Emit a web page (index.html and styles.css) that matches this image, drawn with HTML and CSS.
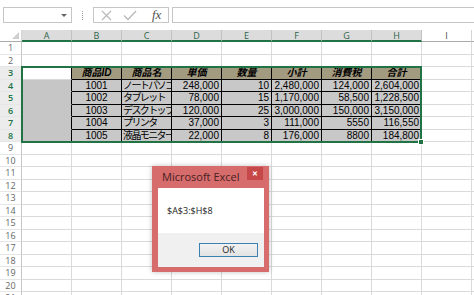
FILE: index.html
```html
<!DOCTYPE html>
<html lang="ja">

<head>
    <meta charset="UTF-8">
    <meta name="viewport" content="width=device-width, initial-scale=1.0">
    <title>Microsoft Excel</title>

    <link rel="stylesheet" href="styles.css">
</head>

<body>

    <div class="toolbar">
        <div class="name-box"><span class="drop"></span></div>
        <div class="grip"></div>
        <div class="fx-box">
            <svg class="icon-cancel" width="11" height="11" viewBox="0 0 11 11">
                <path d="M1 1 L10 10 M10 1 L1 10" stroke="#b9b9b9" stroke-width="1.2" fill="none" />
            </svg>
            <svg class="icon-enter" width="14" height="11" viewBox="0 0 14 11">
                <path d="M1 5.5 L5 9.5 L13 1" stroke="#b9b9b9" stroke-width="1.3" fill="none" />
            </svg>
            <span class="fx">fx</span>
        </div>
        <div class="formula"></div>
    </div>

    <div class="sheet-wrap">
        <div class="sheet"></div>

        <div class="selection"><span class="handle"></span></div>

        <div class="dialog">
            <div class="dialog-title">
                <span>Microsoft Excel</span>
                <span class="close">&#x2715;</span>
            </div>
            <div class="dialog-body">
                <p class="message">$A$3:$H$8</p>
                <div class="buttons">
                    <button class="ok">OK</button>
                </div>
            </div>
        </div>
    </div>

    <script>
        const letters = ["A", "B", "C", "D", "E", "F", "G", "H", "I", ""];
        const align = ["", "center", "left", "right", "right", "right", "right", "right"];

        const rows = {
            3: ["", "商品ID", "商品名", "単価", "数量", "小計", "消費税", "合計"],
            4: ["", "1001", "ノートパソコン", "248,000", "10", "2,480,000", "124,000", "2,604,000"],
            5: ["", "1002", "タブレット", "78,000", "15", "1,170,000", "58,500", "1,228,500"],
            6: ["", "1003", "デスクトップ", "120,000", "25", "3,000,000", "150,000", "3,150,000"],
            7: ["", "1004", "プリンタ", "37,000", "3", "111,000", "5550", "116,550"],
            8: ["", "1005", "液晶モニター", "22,000", "8", "176,000", "8800", "184,800"],
        };

        const sheet = document.querySelector(".sheet");

        const corner = document.createElement("div");
        corner.className = "corner";
        corner.innerHTML = "<span class='tri'></span>";
        sheet.append(corner);

        letters.forEach((letter, i) => {
            const head = document.createElement("div");
            head.className = "col-head";
            if (i < 8) head.classList.add("selected");
            head.innerText = letter;
            sheet.append(head);
        });

        for (let r = 1; r <= 21; r++) {
            const rowHead = document.createElement("div");
            rowHead.className = "row-head";
            if (r >= 3 && r <= 8) rowHead.classList.add("selected");
            rowHead.innerText = r;
            sheet.append(rowHead);

            const values = rows[r];
            for (let c = 0; c < letters.length; c++) {
                const cell = document.createElement("div");
                cell.className = "cell";
                if (values && c < 8) {
                    if (c == 0) {
                        cell.classList.add("edge");
                        if (r > 3) cell.classList.add("shade");
                    } else {
                        cell.classList.add(r == 3 ? "head" : "data");
                        cell.classList.add(r == 3 ? "center" : align[c]);
                        cell.innerText = values[c];
                    }
                }
                if (r == 2 && c > 0 && c < 8) cell.classList.add("top-edge");
                sheet.append(cell);
            }
        }
    </script>
</body>

</html>
```

FILE: styles.css
```css
* {
    box-sizing: border-box;
}

body {
    margin: 0;
    width: 474px;
    height: 295px;
    overflow: hidden;
    background-color: #fff;
    font-family: "Open Sans", sans-serif;
}

/* formula bar */

.toolbar {
    display: flex;
    align-items: flex-start;
    height: 30px;
    padding: 7px 0 0 3px;
}

.name-box {
    display: flex;
    align-items: center;
    justify-content: flex-end;
    width: 69px;
    height: 16px;
    padding-right: 4px;
    border: 1px solid #c6c6c6;
}

.drop {
    width: 0;
    height: 0;
    border-left: 3px solid transparent;
    border-right: 3px solid transparent;
    border-top: 3px solid #666;
}

.grip {
    width: 1px;
    height: 9px;
    margin: 4px 10px 0 10px;
    border-left: 1px dotted #9a9a9a;
}

.fx-box {
    display: flex;
    align-items: center;
    width: 76px;
    height: 16px;
    padding-left: 7px;
    border: 1px solid #c6c6c6;
}

.icon-enter {
    margin-left: 11px;
}

.fx {
    margin-left: 15px;
    font-family: "Liberation Serif", serif;
    font-style: italic;
    font-size: 13px;
    line-height: 14px;
    color: #505050;
}

.formula {
    flex: 1;
    height: 16px;
    margin-left: 3px;
    border: 1px solid #c6c6c6;
    border-right: 0;
}

/* sheet */

.sheet-wrap {
    position: relative;
}

.sheet {
    display: grid;
    grid-template-columns: 22px repeat(9, 50px) 1fr;
    grid-template-rows: 12px;
    grid-auto-rows: 12.5px;
    font-family: "Liberation Sans", "Noto Sans CJK JP", sans-serif;
}

.corner {
    position: relative;
    border-right: 1px solid #d4d4d4;
    border-bottom: 1px solid #ababab;
}

.corner .tri {
    position: absolute;
    right: 2px;
    bottom: 2px;
    width: 0;
    height: 0;
    border-left: 7px solid transparent;
    border-bottom: 7px solid #cfcfcf;
}

.col-head {
    font-family: "Open Sans", sans-serif;
    font-size: 9px;
    line-height: 11px;
    text-align: center;
    color: #444;
    border-right: 1px solid #d4d4d4;
    border-bottom: 1px solid #ababab;
}

.col-head.selected {
    background-color: #dcdcdc;
    color: #2c6449;
    border-right-color: #c2c2c2;
    border-bottom: 2px solid #217346;
}

.row-head {
    font-family: "Open Sans", sans-serif;
    font-size: 9px;
    line-height: 12px;
    text-align: center;
    color: #666;
    border-right: 1px solid #c6c6c6;
    border-bottom: 1px solid #e6e6e6;
}

.row-head.selected {
    background-color: #ececec;
    color: #217346;
    font-weight: 600;
}

.cell {
    overflow: hidden;
    white-space: nowrap;
    font-size: 10px;
    line-height: 12px;
    padding: 0 2px;
    color: #000;
    border-right: 1px solid #dadada;
    border-bottom: 1px solid #dadada;
}

.cell.edge {
    border-right-color: #000;
}

.cell.shade {
    background-color: #c6c6c6;
    border-bottom-color: #c6c6c6;
}

.cell.top-edge {
    border-bottom-color: #000;
}

.cell.data {
    background-color: #c8c8c8;
    border-right-color: #000;
    border-bottom-color: #000;
}

.cell.head {
    background-color: #a39b80;
    border-right-color: #000;
    border-bottom-color: #000;
    font-weight: bold;
    font-style: italic;
}

.center {
    text-align: center;
}

.left {
    text-align: left;
    letter-spacing: -1.6px;
    padding-left: 1px;
}

.right {
    text-align: right;
}

/* selection A3:H8 */

.selection {
    position: absolute;
    left: 21px;
    top: 36px;
    width: 401px;
    height: 77px;
    border: 2px solid #217346;
    pointer-events: none;
}

.handle {
    position: absolute;
    right: -4px;
    bottom: -4px;
    width: 6px;
    height: 6px;
    background-color: #217346;
    border: 1px solid #fff;
}

/* message box */

.dialog {
    position: absolute;
    left: 152px;
    top: 136px;
    width: 117px;
    height: 106px;
    display: flex;
    flex-direction: column;
    padding: 0 5px 5px 6px;
    background-color: #d66c6c;
    box-shadow: 0 0 5px rgba(0, 0, 0, 0.25);
}

.dialog-title {
    display: flex;
    justify-content: space-between;
    align-items: flex-start;
    height: 22px;
    padding-left: 4px;
    font-size: 11px;
    line-height: 22px;
    color: #4a1f1f;
}

.close {
    width: 16px;
    height: 13px;
    margin: 1px 1px 0 0;
    background-color: #c64848;
    color: #fff;
    font-size: 7px;
    font-weight: bold;
    line-height: 13px;
    text-align: center;
}

.dialog-body {
    flex: 1;
    display: flex;
    flex-direction: column;
    background-color: #fff;
}

.message {
    display: flex;
    align-items: center;
    height: 45px;
    margin: 0;
    padding-left: 9px;
    font-size: 9px;
    color: #222;
}

.buttons {
    flex: 1;
    display: flex;
    justify-content: flex-end;
    align-items: flex-start;
    padding: 10px 6px 0 0;
    background-color: #f0f0f0;
}

.ok {
    width: 59px;
    height: 14px;
    padding: 0;
    border: 1px solid #3c7fb1;
    background: linear-gradient(#f2f2f2, #e3e3e3);
    font-family: "Open Sans", sans-serif;
    font-size: 9px;
    line-height: 12px;
    color: #222;
}
```
